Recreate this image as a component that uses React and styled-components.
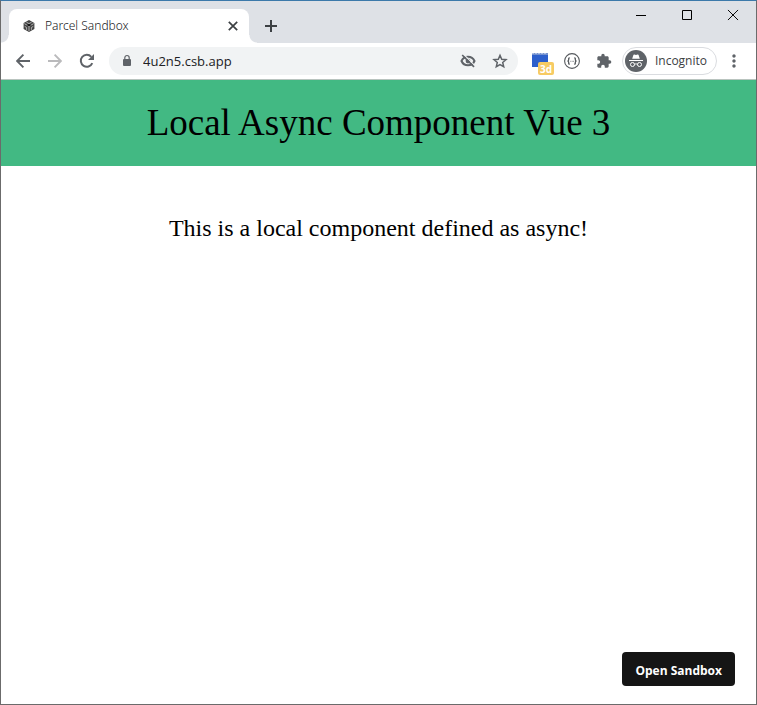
import React, { useState } from 'react';
import styled, { createGlobalStyle } from 'styled-components';
import { MdMoreVert, MdExtension } from 'react-icons/md';

const GlobalStyle = createGlobalStyle`
  * {
    box-sizing: border-box;
  }

  body {
    margin: 0;
    background: #fff;
  }

  button, input {
    font-family: 'Open Sans', 'Noto Sans', sans-serif;
    margin: 0;
    padding: 0;
    border: 0;
    background: none;
  }
`;

const Window = styled.div`
  position: relative;
  display: flex;
  flex-direction: column;
  min-height: 100vh;
  border: 1px solid #6b6b6b;
  border-top-color: #3c79aa;
  background: #fff;
`;

const TitleBar = styled.div`
  display: flex;
  align-items: flex-start;
  height: 42px;
  padding-left: 8px;
  background: #dee1e6;
`;

const Tab = styled.div`
  position: relative;
  display: flex;
  align-items: center;
  flex: 0 1 240px;
  height: 34px;
  margin-top: 8px;
  padding: 0 10px 0 14px;
  border-radius: 8px 8px 0 0;
  background: #fff;

  &::before,
  &::after {
    content: '';
    position: absolute;
    bottom: 0;
    width: 8px;
    height: 8px;
  }

  &::before {
    right: 100%;
    background: radial-gradient(circle at 0 0, transparent 7px, #fff 8px);
  }

  &::after {
    left: 100%;
    background: radial-gradient(circle at 100% 0, transparent 7px, #fff 8px);
  }
`;

const TabTitle = styled.span`
  flex: 1;
  margin-left: 10px;
  font: 300 12px/16px 'Noto Sans', 'Open Sans', sans-serif;
  color: #202124;
  white-space: nowrap;
`;

const IconButton = styled.button`
  display: flex;
  align-items: center;
  justify-content: center;
  flex: none;
  width: ${({ $width }) => $width || 32}px;
  height: ${({ $height }) => $height || 28}px;
  color: ${({ $color }) => $color || '#5f6368'};
`;

const NewTab = styled(IconButton)`
  margin: 11px 0 0 6px;
`;

const WindowControls = styled.div`
  display: flex;
  margin-left: auto;
`;

const Toolbar = styled.div`
  display: flex;
  align-items: center;
  height: 37px;
  padding: 0 6px 1px;
  border-bottom: 1px solid #b9c4bf;
  background: #fff;
`;

const AddressBar = styled.label`
  display: flex;
  align-items: center;
  flex: 1;
  min-width: 0;
  height: 28px;
  margin: 0 6px;
  padding: 0 2px 0 11px;
  border-radius: 14px;
  background: #f1f3f4;
  color: #5f6368;
`;

const AddressInput = styled.input`
  flex: 1;
  min-width: 0;
  margin-left: 9px;
  font-size: 13px;
  line-height: 20px;
  color: #202124;
  outline: none;
`;

const Profile = styled.button`
  display: flex;
  align-items: center;
  gap: 8px;
  flex: none;
  height: 28px;
  margin-left: 2px;
  padding: 0 9px 0 2px;
  border: 1px solid #dadce0;
  border-radius: 14px;
  font-size: 12px;
  line-height: 16px;
  color: #3c4043;
`;

const MenuButton = styled(IconButton)`
  margin-left: 1px;
`;

const Banner = styled.header`
  padding: 21px 16px 22px;
  background: #42b983;
  text-align: center;
`;

const Title = styled.h1`
  margin: 0;
  font: 400 37px/43px 'Liberation Serif', serif;
  color: #000;
`;

const Message = styled.p`
  margin: 48px 16px 0;
  font: 400 24px/28px 'Liberation Serif', serif;
  text-align: center;
  color: #000;
`;

const OpenSandbox = styled.button`
  position: absolute;
  right: 21px;
  bottom: 18px;
  height: 34px;
  padding: 4px 13px 0;
  border-radius: 4px;
  background: #151515;
  color: #fff;
  font-size: 12px;
  font-weight: 700;
  line-height: 16px;
`;

function SandboxLogo() {
  return (
    <svg width="12" height="12" viewBox="0 0 12 12" aria-hidden="true">
      <path d="M6 0l5.4 3v6L6 12 .6 9V3z" fill="#444" />
      <path d="M3.4 2.2L6 3.6l2.6-1.4M1.3 3.6L6 6.2l4.7-2.6M6 6.2V11M1.7 6.4l1.9 1.1v2.3M10.3 6.4L8.4 7.5v2.3" fill="none" stroke="#ccc" strokeWidth=".8" />
      <path d="M6 3.9l2.6 1.2L6 6.3 3.4 5.1z" fill="#111" />
    </svg>
  );
}

function CrossIcon({ size, stroke }) {
  return (
    <svg width={size} height={size} viewBox="0 0 10 10" aria-hidden="true">
      <path d="M.8.8l8.4 8.4M9.2.8L.8 9.2" fill="none" stroke="currentColor" strokeWidth={stroke} />
    </svg>
  );
}

function ArrowIcon({ forward }) {
  return (
    <svg width="14" height="14" viewBox="0 0 14 14" fill="none" stroke="currentColor" strokeWidth="1.9" aria-hidden="true">
      <path d={forward ? 'M0 7h12.5M6.6.7L12.9 7l-6.300 6.300' : 'M14 7H1.500M7.400.7L1.100 7l6.300 6.300'} />
    </svg>
  );
}

function ReloadIcon() {
  return (
    <svg width="16" height="16" viewBox="0 0 16 16" aria-hidden="true">
      <path d="M13.3 10.2A6 6 0 1 1 12.3 3.8" fill="none" stroke="currentColor" strokeWidth="2" />
      <path d="M15 1v6H9z" fill="currentColor" />
    </svg>
  );
}

function LockIcon() {
  return (
    <svg width="14" height="14" viewBox="0 0 14 14" aria-hidden="true">
      <rect x="3" y="5" width="8" height="7" rx="1" fill="currentColor" />
      <path d="M4.8 5.4V3.7a2.2 2.2 0 014.4 0v1.7" fill="none" stroke="currentColor" strokeWidth="1.2" />
    </svg>
  );
}

function EyeOffIcon() {
  return (
    <svg width="16" height="16" viewBox="0 0 16 16" fill="none" stroke="currentColor" aria-hidden="true">
      <path d="M1.5 8C2.7 5.2 5.1 3.7 8 3.7S13.3 5.2 14.5 8C13.3 10.8 10.9 12.3 8 12.3S2.7 10.8 1.5 8z" strokeWidth="2" />
      <circle cx="8" cy="8" r="2.4" fill="currentColor" stroke="none" />
      <path d="M3.4 1.2l11.4 11.4" stroke="#f1f3f4" strokeWidth="1.2" />
      <path d="M2.2 2l11.8 11.8" strokeWidth="1.7" />
    </svg>
  );
}

function StarIcon() {
  return (
    <svg width="16" height="16" viewBox="0 0 16 16" aria-hidden="true">
      <path d="M8 2.3l1.7 4 4.3.4-3.3 2.8 1 4.2L8 11.5l-3.7 2.2 1-4.2L2 6.7l4.3-.4z" fill="none" stroke="currentColor" strokeWidth="1.5" />
    </svg>
  );
}

function CalendarIcon() {
  return (
    <svg width="24" height="24" viewBox="0 0 24 24" overflow="visible" aria-hidden="true">
      <path d="M4 4h16v14H4z" fill="#2d5fcb" />
      <path d="M4 4h16v2H4z" fill="#7592cf" />
      <path d="M5 4v1M8 4v1M11 4v1M14 4v1M17 4v1" stroke="#e4ebf8" />
      <rect x="10" y="13" width="16" height="13" rx="2" fill="#f7cb63" />
      <text x="18" y="24" textAnchor="middle" fontFamily="Open Sans, sans-serif" fontSize="10" fontWeight="700" fill="#fff">3d</text>
    </svg>
  );
}

function BracesIcon() {
  return (
    <svg width="16" height="16" viewBox="0 0 16 16" fill="none" stroke="#55595d" aria-hidden="true">
      <circle cx="8" cy="8" r="7.4" strokeWidth="1.1" />
      <path d="M5.8 4.8c-1.3 0-1.1.7-1.1 1.6S4.4 8 3.5 8c.9 0 1.2.7 1.2 1.6s-.2 1.6 1.1 1.6M10.2 4.8c1.3 0 1.1.7 1.1 1.6S11.6 8 12.5 8c-.9 0-1.2.7-1.2 1.6s.2 1.6-1.1 1.6" strokeWidth="1.3" />
      <path d="M6.4 8.3h.8M7.8 8.3h.8M9.2 8.3h.8" strokeWidth=".8" />
    </svg>
  );
}

function IncognitoIcon() {
  return (
    <svg width="22" height="22" viewBox="0 0 22 22" aria-hidden="true">
      <circle cx="11" cy="11" r="11" fill="#5f6368" />
      <path d="M7.2 8.7l1.1-3.5c.2-.6.6-.8 1.1-.6l1.6.5 1.6-.5c.5-.2.9 0 1.1.6l1.1 3.5z" fill="#fff" />
      <path d="M4 10h14v1H4z" fill="#fff" />
      <g fill="none" stroke="#fff">
        <circle cx="7.5" cy="14.5" r="2" />
        <circle cx="14.5" cy="14.5" r="2" />
        <path d="M9.5 14.3c.9-.5 2.1-.5 3 0" />
      </g>
    </svg>
  );
}

export default function App() {
  const [address, setAddress] = useState('4u2n5.csb.app');

  return (
    <>
      <GlobalStyle />
      <Window>
        <TitleBar>
          <Tab>
            <SandboxLogo />
            <TabTitle>Parcel Sandbox</TabTitle>
            <IconButton $width={12} $height={16} $color="#3c4043" aria-label="Close tab">
              <CrossIcon size={10} stroke={1.7} />
            </IconButton>
          </Tab>
          <NewTab $color="#3c4043" aria-label="New tab">
            <svg width="12" height="12" viewBox="0 0 12 12" aria-hidden="true">
              <path d="M6 0v12M0 6h12" stroke="currentColor" strokeWidth="2" />
            </svg>
          </NewTab>
          <WindowControls>
            <IconButton $width={46} $color="#000" aria-label="Minimize">
              <svg width="10" height="10" viewBox="0 0 10 10" aria-hidden="true">
                <path d="M0 5.5h10" stroke="currentColor" />
              </svg>
            </IconButton>
            <IconButton $width={46} $color="#000" aria-label="Maximize">
              <svg width="10" height="10" viewBox="0 0 10 10" aria-hidden="true">
                <path d="M.5.5h9v9h-9z" fill="none" stroke="currentColor" />
              </svg>
            </IconButton>
            <IconButton $width={46} $color="#000" aria-label="Close window">
              <CrossIcon size={12} stroke={0.8} />
            </IconButton>
          </WindowControls>
        </TitleBar>

        <Toolbar>
          <IconButton aria-label="Back">
            <ArrowIcon />
          </IconButton>
          <IconButton $color="#bababc" aria-label="Forward">
            <ArrowIcon forward />
          </IconButton>
          <IconButton aria-label="Reload">
            <ReloadIcon />
          </IconButton>
          <AddressBar>
            <LockIcon />
            <AddressInput
              aria-label="Address"
              value={address}
              onChange={(e) => setAddress(e.target.value)}
            />
            <IconButton aria-label="Third-party cookies blocked">
              <EyeOffIcon />
            </IconButton>
            <IconButton aria-label="Bookmark this tab">
              <StarIcon />
            </IconButton>
          </AddressBar>
          <IconButton aria-label="Calendar">
            <CalendarIcon />
          </IconButton>
          <IconButton aria-label="JSON viewer">
            <BracesIcon />
          </IconButton>
          <IconButton aria-label="Extensions">
            <MdExtension size={16} />
          </IconButton>
          <Profile>
            <IncognitoIcon />
            Incognito
          </Profile>
          <MenuButton aria-label="Menu">
            <MdMoreVert size={20} />
          </MenuButton>
        </Toolbar>

        <Banner>
          <Title>Local Async Component Vue 3</Title>
        </Banner>
        <main>
          <Message>This is a local component defined as async!</Message>
        </main>
        <OpenSandbox>Open Sandbox</OpenSandbox>
      </Window>
    </>
  );
}
